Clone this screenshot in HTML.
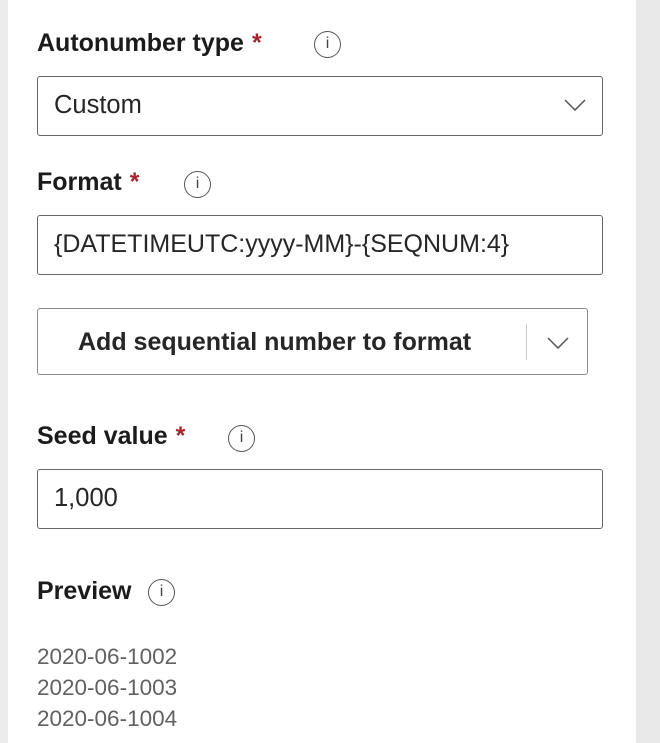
<!DOCTYPE html>
<html><head><style>
html,body{margin:0;padding:0;width:660px;height:743px;overflow:hidden;background:#fff;font-family:"Liberation Sans",sans-serif;}
.left{position:absolute;left:0;top:0;width:8px;height:743px;background:#ececec;}
.right{position:absolute;left:636px;top:0;width:24px;height:743px;background:#e9e9e9;}
.lbl{position:absolute;left:37px;font-size:25px;font-weight:bold;color:#1b1b1b;}
.star{color:#a4262c;font-weight:bold;margin-left:8px;}
.info{position:absolute;width:27px;height:27px;border:1.5px solid #555;border-radius:50%;box-sizing:border-box;font-size:16px;color:#444;text-align:center;line-height:24px;font-weight:normal;}
.box{position:absolute;left:37px;width:566px;height:60px;border:1.5px solid #666;border-radius:3px;box-sizing:border-box;font-size:25px;color:#262626;padding-left:16px;line-height:57px;}
.chev{position:absolute;}
.prev{position:absolute;left:37px;font-size:22.5px;color:#616161;}
</style></head><body>
<div class="left"></div><div class="right"></div>
<div class="lbl" style="top:29px">Autonumber type<span class="star">*</span></div>
<div class="info" style="left:314px;top:31px">i</div>
<div class="box" style="top:76px;font-size:25.5px">Custom
<svg class="chev" style="right:16px;top:22px" width="22" height="12" viewBox="0 0 22 12"><path d="M1 1 L11 11 L21 1" fill="none" stroke="#555" stroke-width="1.5"/></svg></div>
<div class="lbl" style="top:168px">Format<span class="star">*</span></div>
<div class="info" style="left:184px;top:171px">i</div>
<div class="box" style="top:215px;font-size:25px;">{DATETIMEUTC:yyyy-MM}-{SEQNUM:4}</div>
<div class="box" style="top:308px;width:551px;height:67px;border-color:#8a8a8a;padding-left:40px;line-height:66px;font-weight:bold;font-size:25px;color:#262626;">Add sequential number to format
<div style="position:absolute;left:488px;top:15px;width:1px;height:36px;background:#c8c8c8"></div>
<svg class="chev" style="left:509px;top:28px" width="22" height="12" viewBox="0 0 22 12"><path d="M1 1 L11 11 L21 1" fill="none" stroke="#555" stroke-width="1.5"/></svg></div>
<div class="lbl" style="top:422px">Seed value<span class="star">*</span></div>
<div class="info" style="left:228px;top:425px">i</div>
<div class="box" style="top:469px;font-size:25.5px">1,000</div>
<div class="lbl" style="top:577px">Preview</div>
<div class="info" style="left:148px;top:579px">i</div>
<div class="prev" style="top:644px">2020-06-1002</div>
<div class="prev" style="top:675px">2020-06-1003</div>
<div class="prev" style="top:706px">2020-06-1004</div>
</body></html>
